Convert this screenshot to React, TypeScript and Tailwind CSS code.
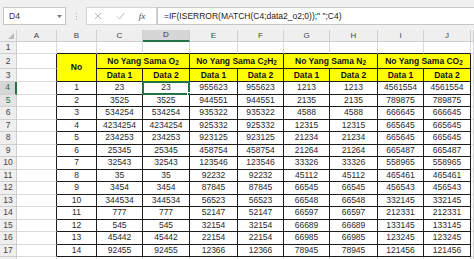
import React from "react";

const data: (string | number)[][] = [
  [1, 23, 23, 955623, 955623, 1213, 1213, 4561554, 4561554],
  [2, 3525, 3525, 944551, 944551, 2135, 2135, 789875, 789875],
  [3, 534254, 534254, 935322, 935322, 4588, 4588, 666645, 666645],
  [4, 4234254, 4234254, 925332, 925332, 12315, 12315, 665645, 665645],
  [5, 234253, 234253, 923125, 923125, 21234, 21234, 665645, 665645],
  [6, 25345, 25345, 458754, 458754, 21264, 21264, 665487, 665487],
  [7, 32543, 32543, 123546, 123546, 33326, 33326, 558965, 558965],
  [8, 35, 35, 92232, 92232, 45112, 45112, 465461, 465461],
  [9, 3454, 3454, 87845, 87845, 66545, 66545, 456543, 456543],
  [10, 344534, 344534, 56523, 56523, 66548, 66548, 332145, 332145],
  [11, 777, 777, 52147, 52147, 66597, 66597, 212331, 212331],
  [12, 545, 545, 32154, 32154, 66689, 66689, 133145, 133145],
  [13, 45442, 45442, 22154, 22154, 66985, 66985, 123245, 123245],
  [14, 92455, 92455, 12366, 12366, 78945, 78945, 121456, 121456],
];

const cols = ["A", "B", "C", "D", "E", "F", "G", "H", "I", "J"];

const hdr = "flex items-center justify-center bg-[#efefef] text-[#444] border-r border-b border-[#cfcfcf] text-[8px]";
const rowHdr = "flex items-center justify-center bg-[#efefef] text-[#444] border-r border-b border-[#cfcfcf] text-[8.5px]";
const plain = "border-r border-b border-[#dadada] bg-white";
const tcell = "flex items-center justify-center border-r border-b border-[#1c1c1c] bg-white text-[#2a2a2a] text-[8.5px] relative";
const ycell = "flex items-center justify-center border-r border-b border-[#1c1c1c] bg-[#ffff00] text-[#111] font-bold text-[8.5px]";

export default function App() {
  return (
    <div
      className="w-[474px] h-[259px] overflow-hidden bg-white"
      style={{ fontFamily: '"Liberation Sans", Arial, sans-serif' }}
    >
      {/* Formula bar */}
      <div className="h-[30px] bg-[#f0f0f0] flex items-start pt-[7px] pl-[3px]">
        <div className="w-[63px] h-[18px] bg-white border border-[#c6c6c6] flex items-center justify-between pl-[5px] pr-[3px] text-[8.5px] text-[#333]">
          <span>D4</span>
          <svg width="5" height="3" viewBox="0 0 5 3"><path d="M0 0h5L2.5 3z" fill="#777" /></svg>
        </div>
        <div className="w-[20px] h-[18px] flex flex-col items-center justify-center gap-[2px]">
          <div className="w-[1px] h-[1px] bg-[#aaa]" />
          <div className="w-[1px] h-[1px] bg-[#aaa]" />
          <div className="w-[1px] h-[1px] bg-[#aaa]" />
        </div>
        <div className="w-[71px] h-[18px] bg-white border border-[#d4d4d4] flex items-center">
          <span className="w-[22px] flex justify-center">
            <svg width="8" height="8" viewBox="0 0 8 8"><path d="M1 1l6 6M7 1L1 7" stroke="#b8b8b8" strokeWidth="1" /></svg>
          </span>
          <span className="w-[22px] flex justify-center">
            <svg width="9" height="8" viewBox="0 0 9 8"><path d="M1 4.5l2.5 2.5L8 1" stroke="#b8b8b8" strokeWidth="1" fill="none" /></svg>
          </span>
          <span
            className="w-[22px] flex justify-center items-baseline text-[#444] italic text-[9px] leading-none"
            style={{ fontFamily: '"Liberation Serif", serif' }}
          >
            fx
          </span>
        </div>
        <div className="flex-1 h-[18px] bg-white border border-[#c6c6c6] border-r-0 flex items-center pl-[6px] text-[8.5px] text-[#222] whitespace-pre">
          =IF(ISERROR(MATCH(C4;data2_o2;0));" ";C4)
        </div>
      </div>

      {/* Grid */}
      <div className="grid grid-cols-[17px_40px_40px_46px_47px_48px_46px_46px_48px_46px_47px_1fr] grid-rows-[12px_12px_15px_13px_repeat(14,12.5px)_12px]">
        {/* column headers */}
        <div className={hdr + " relative"}>
          <svg className="absolute right-[2px] bottom-[2px]" width="6" height="6" viewBox="0 0 6 6"><path d="M6 0v6H0z" fill="#b9b9b9" /></svg>
        </div>
        {cols.map((c) =>
          c === "D" ? (
            <div key={c} className="flex items-center justify-center bg-[#d6d6d6] text-[#333] border-r border-[#cfcfcf] border-b-2 border-b-[#217346] text-[8px]">{c}</div>
          ) : (
            <div key={c} className={hdr}>{c}</div>
          )
        )}
        <div className={hdr} />

        {/* row 1 */}
        <div className={rowHdr}>1</div>
        <div className={plain} />
        {cols.slice(1).map((c) => (
          <div key={c} className="border-r border-b border-r-[#dadada] border-b-[#1c1c1c] bg-white" />
        ))}
        <div className={plain} />

        {/* row 2 */}
        <div className={rowHdr}>2</div>
        <div className="border-r border-b border-r-[#1c1c1c] border-b-[#dadada] bg-white" />
        <div className={ycell + " row-span-2"}>No</div>
        <div className={ycell + " col-span-2"}>No Yang Sama O<sub>2</sub></div>
        <div className={ycell + " col-span-2"}>No Yang Sama C<sub>2</sub>H<sub>2</sub></div>
        <div className={ycell + " col-span-2"}>No Yang Sama N<sub>2</sub></div>
        <div className={ycell + " col-span-2"}>No Yang Sama CO<sub>2</sub></div>
        <div className={plain} />

        {/* row 3 */}
        <div className={rowHdr}>3</div>
        <div className="border-r border-b border-r-[#1c1c1c] border-b-[#dadada] bg-white" />
        <div className={ycell}>Data 1</div>
        <div className={ycell}>Data 2</div>
        <div className={ycell}>Data 1</div>
        <div className={ycell}>Data 2</div>
        <div className={ycell}>Data 1</div>
        <div className={ycell}>Data 2</div>
        <div className={ycell}>Data 1</div>
        <div className={ycell}>Data 2</div>
        <div className={plain} />

        {/* data rows */}
        {data.map((row, i) => (
          <React.Fragment key={i}>
            {i === 0 ? (
              <div className="flex items-center justify-center bg-[#d6d6d6] text-[#217346] border-r-2 border-r-[#217346] border-b border-b-[#cfcfcf] text-[8.5px]">{i + 4}</div>
            ) : i === 1 ? (
              <div className="flex items-center justify-center bg-[#e4e4e4] text-[#217346] border-r border-b border-[#cfcfcf] text-[8.5px]">{i + 4}</div>
            ) : (
              <div className={rowHdr}>{i + 4}</div>
            )}
            <div className="border-r border-b border-r-[#1c1c1c] border-b-[#dadada] bg-white" />
            {row.map((v, j) => (
              <div key={j} className={tcell}>
                {v}
                {i === 0 && j === 2 ? (
                  <>
                    <div className="absolute left-[-1px] top-[-1px] right-[-1px] bottom-[-1px] border-2 border-[#217346] pointer-events-none" />
                    <div className="absolute right-[-3px] bottom-[-3px] w-[5px] h-[5px] bg-[#217346] border border-white" />
                  </>
                ) : null}
              </div>
            ))}
            <div className={plain} />
          </React.Fragment>
        ))}

        {/* row 18 (mostly off-screen) */}
        <div className="bg-[#efefef] border-r border-b border-[#cfcfcf]" />
        {cols.map((c) => (
          <div key={c} className={plain} />
        ))}
        <div className={plain} />
      </div>
    </div>
  );
}
